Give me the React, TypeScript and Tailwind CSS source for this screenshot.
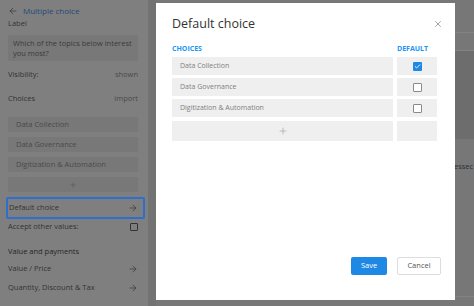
import { ArrowLeft, ArrowRight, Check, Plus, X } from "lucide-react";

const choices = ["Data Collection", "Data Governance", "Digitization & Automation"];

function Row({ label, right, strong }: { label: string; right?: React.ReactNode; strong?: boolean }) {
    return (
        <div className="flex h-[14px] items-center justify-between">
            <span className={strong ? "text-[#262626]" : "text-[#333]"}>{label}</span>
            {right}
        </div>
    );
}

function Box({ checked }: { checked?: boolean }) {
    if (checked) {
        return (
            <span className="flex h-[9px] w-[9px] items-center justify-center rounded-[1px] bg-[#1e88e5]">
                <Check size={7} strokeWidth={3} className="text-white" />
            </span>
        );
    }
    return <span className="h-[9px] w-[9px] rounded-[1px] border border-[#8a8a8a] bg-white" />;
}

export default function App() {
    return (
        <div
            className="relative flex h-[306px] w-[474px] overflow-hidden bg-[#777]"
            style={{ fontFamily: "'Open Sans', 'Liberation Sans', sans-serif" }}
        >
            {/* side panel, dimmed */}
            <div className="flex w-[148px] flex-col bg-[#7f7f7f] pl-[8px] pr-[10px] text-[7.5px] text-[#333]">
                <div className="flex h-[20px] items-center gap-[5px] pt-[2px]">
                    <ArrowLeft size={10} strokeWidth={1.5} className="text-[#2e2e2e]" />
                    <span className="text-[8px] text-[#1f4a78]">Multiple choice</span>
                </div>
                <div className="flex h-[8px] items-end overflow-hidden">
                    <span className="leading-[10px]">Label</span>
                </div>
                <div className="mt-[7px] h-[26px] rounded-[2px] bg-[#787878] px-[5px] pt-[3px] leading-[10px] text-[#3a3a3a]">
                    Which of the topics below interest you most?
                </div>
                <div className="mt-[7px]">
                    <Row label="Visibility:" right={<span className="text-[#4a4a4a]">shown</span>} />
                </div>
                <div className="mt-[10px]">
                    <Row label="Choices" right={<span className="text-[#4a4a4a]">import</span>} />
                </div>
                <div className="mt-[11px] flex flex-col gap-[5px]">
                    {choices.map((c) => (
                        <div key={c} className="flex h-[15px] items-center bg-[#787878] pl-[8px] text-[#4a4a4a]">
                            {c}
                        </div>
                    ))}
                    <div className="flex h-[15px] items-center justify-center bg-[#787878]">
                        <Plus size={8} strokeWidth={1.2} className="text-[#4a4a4a]" />
                    </div>
                </div>
                <div className="mt-[5px] -ml-[2px] -mr-[7px] flex h-[22px] items-center justify-between rounded-[2px] border-2 border-[#2c6fd1] pl-[1px] pr-[5px]">
                    <span>Default choice</span>
                    <ArrowRight size={10} strokeWidth={1.5} className="text-[#2e2e2e]" />
                </div>
                <div className="mt-[1px]">
                    <Row
                        label="Accept other values:"
                        right={<span className="h-[8px] w-[8px] rounded-[1px] border border-[#333]" />}
                    />
                </div>
                <div className="mt-[11px]">
                    <Row label="Value and payments" strong />
                </div>
                <div className="mt-[3px]">
                    <Row label="Value / Price" right={<ArrowRight size={10} strokeWidth={1.5} className="text-[#2e2e2e]" />} />
                </div>
                <div className="mt-[5px]">
                    <Row
                        label="Quantity, Discount & Tax"
                        right={<ArrowRight size={10} strokeWidth={1.5} className="text-[#2e2e2e]" />}
                    />
                </div>
            </div>
            <div className="w-[8px] bg-[#737373]" />

            {/* page behind the modal */}
            <div className="flex flex-1 flex-col bg-[#777] text-[7.5px] text-[#2e2e2e]">
                <div className="h-[32px]" />
                <div className="h-px bg-[#828282]" />
                <div className="h-[17px]" />
                <div className="h-px bg-[#828282]" />
                <div className="h-[88px] bg-[#6d6d6d]" />
                <div className="mt-[22px] whitespace-nowrap pl-[298px]">essec</div>
                <div className="flex-1" />
                <div className="mb-[9px] h-px bg-[#828282]" />
            </div>

            {/* modal */}
            <div className="absolute left-[156px] top-[3px] flex h-[297px] w-[299px] flex-col bg-white pl-[16px] pr-[14px] text-[#333]">
                <div className="flex items-center justify-between pt-[13px] -mr-[2px]">
                    <span className="text-[12.5px] leading-[16px] text-[#333]">Default choice</span>
                    <X size={10} strokeWidth={1.3} className="text-[#555]" />
                </div>
                <div className="mt-[12px] grid grid-cols-[221px_40px] gap-x-[4px] gap-y-[3px] text-[7px]">
                    <div className="flex h-[10px] items-center text-[7px] font-bold text-[#2196f3]">CHOICES</div>
                    <div className="flex h-[10px] items-center text-[7px] font-bold text-[#2196f3]">DEFAULT</div>
                    {choices.map((c, i) => (
                        <div key={c} className="contents">
                            <div className="flex h-[18px] items-center bg-[#efefef] pl-[8px] text-[#808080]">{c}</div>
                            <div className="flex h-[18px] items-center justify-center bg-[#efefef]">
                                <Box checked={i === 0} />
                            </div>
                        </div>
                    ))}
                    <div className="mt-[1px] flex h-[20px] items-center justify-center bg-[#efefef]">
                        <Plus size={10} strokeWidth={1.2} className="text-[#888]" />
                    </div>
                    <div className="mt-[1px] h-[20px] bg-[#efefef]" />
                </div>
                <div className="flex-1" />
                <div className="mb-[25px] flex justify-end gap-[10px]">
                    <button className="h-[18px] w-[36px] rounded-[2px] bg-[#1e88e5] text-[7.5px] text-white">Save</button>
                    <button className="h-[18px] w-[44px] rounded-[2px] border border-[#ddd] bg-white text-[7.5px] text-[#555]">
                        Cancel
                    </button>
                </div>
            </div>
        </div>
    );
}
